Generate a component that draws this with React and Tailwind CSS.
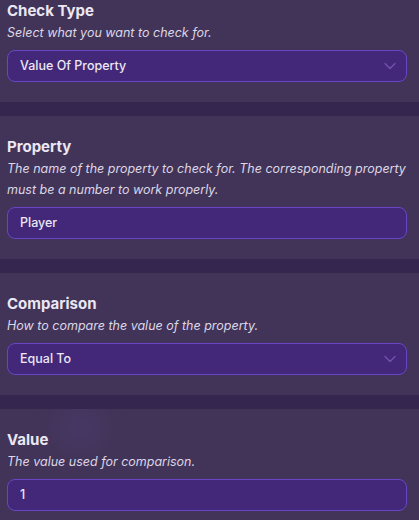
import React from 'react';

const Chevron = () => (
  <svg width="12" height="8" viewBox="0 0 12 8" fill="none" className="shrink-0">
    <path d="M1 1.5 6 6.5 11 1.5" stroke="#7352ad" strokeWidth="1.3" strokeLinecap="round" strokeLinejoin="round" />
  </svg>
);

const Field = ({ value, select }) => (
  <div className="mt-[7px] h-8 rounded-lg border border-[#6a46c6] bg-[#43287a] pl-3 pr-[10px] flex items-center justify-between">
    <span className="text-[12.5px] font-medium text-[#ebe7f3]">{value}</span>
    {select && <Chevron />}
  </div>
);

const Section = ({ title, desc, value, select, first }) => (
  <div className={`${first ? 'pt-0' : 'pt-5'} pb-5 pl-[7px] pr-3`}>
    <div className="text-[15px] leading-[22px] font-bold text-[#ebe7f3]">{title}</div>
    <div className="text-[12.5px] leading-[21px] italic text-[#dcd6e6]">{desc}</div>
    <Field value={value} select={select} />
  </div>
);

const Divider = () => <div className="h-[14px] bg-[#34264f]" />;

export default function App() {
  const sections = [
    { title: 'Check Type', desc: 'Select what you want to check for.', value: 'Value Of Property', select: true },
    {
      title: 'Property',
      desc: 'The name of the property to check for. The corresponding property must be a number to work properly.',
      value: 'Player',
    },
    { title: 'Comparison', desc: 'How to compare the value of the property.', value: 'Equal To', select: true },
    { title: 'Value', desc: 'The value used for comparison.', value: '1' },
  ];

  return (
    <div
      className="relative w-[419px] h-[520px] overflow-hidden bg-[#423458]"
      style={{ fontFamily: 'Inter, "Noto Sans", sans-serif' }}
    >
      <div className="pointer-events-none absolute left-[58px] top-[406px] w-11 h-11 rounded-full bg-[#4a3b6e] opacity-60 blur-md" />
      <div className="relative">
        {sections.map((s, i) => (
          <React.Fragment key={s.title}>
            {i > 0 && <Divider />}
            <Section {...s} first={i === 0} />
          </React.Fragment>
        ))}
      </div>
    </div>
  );
}
